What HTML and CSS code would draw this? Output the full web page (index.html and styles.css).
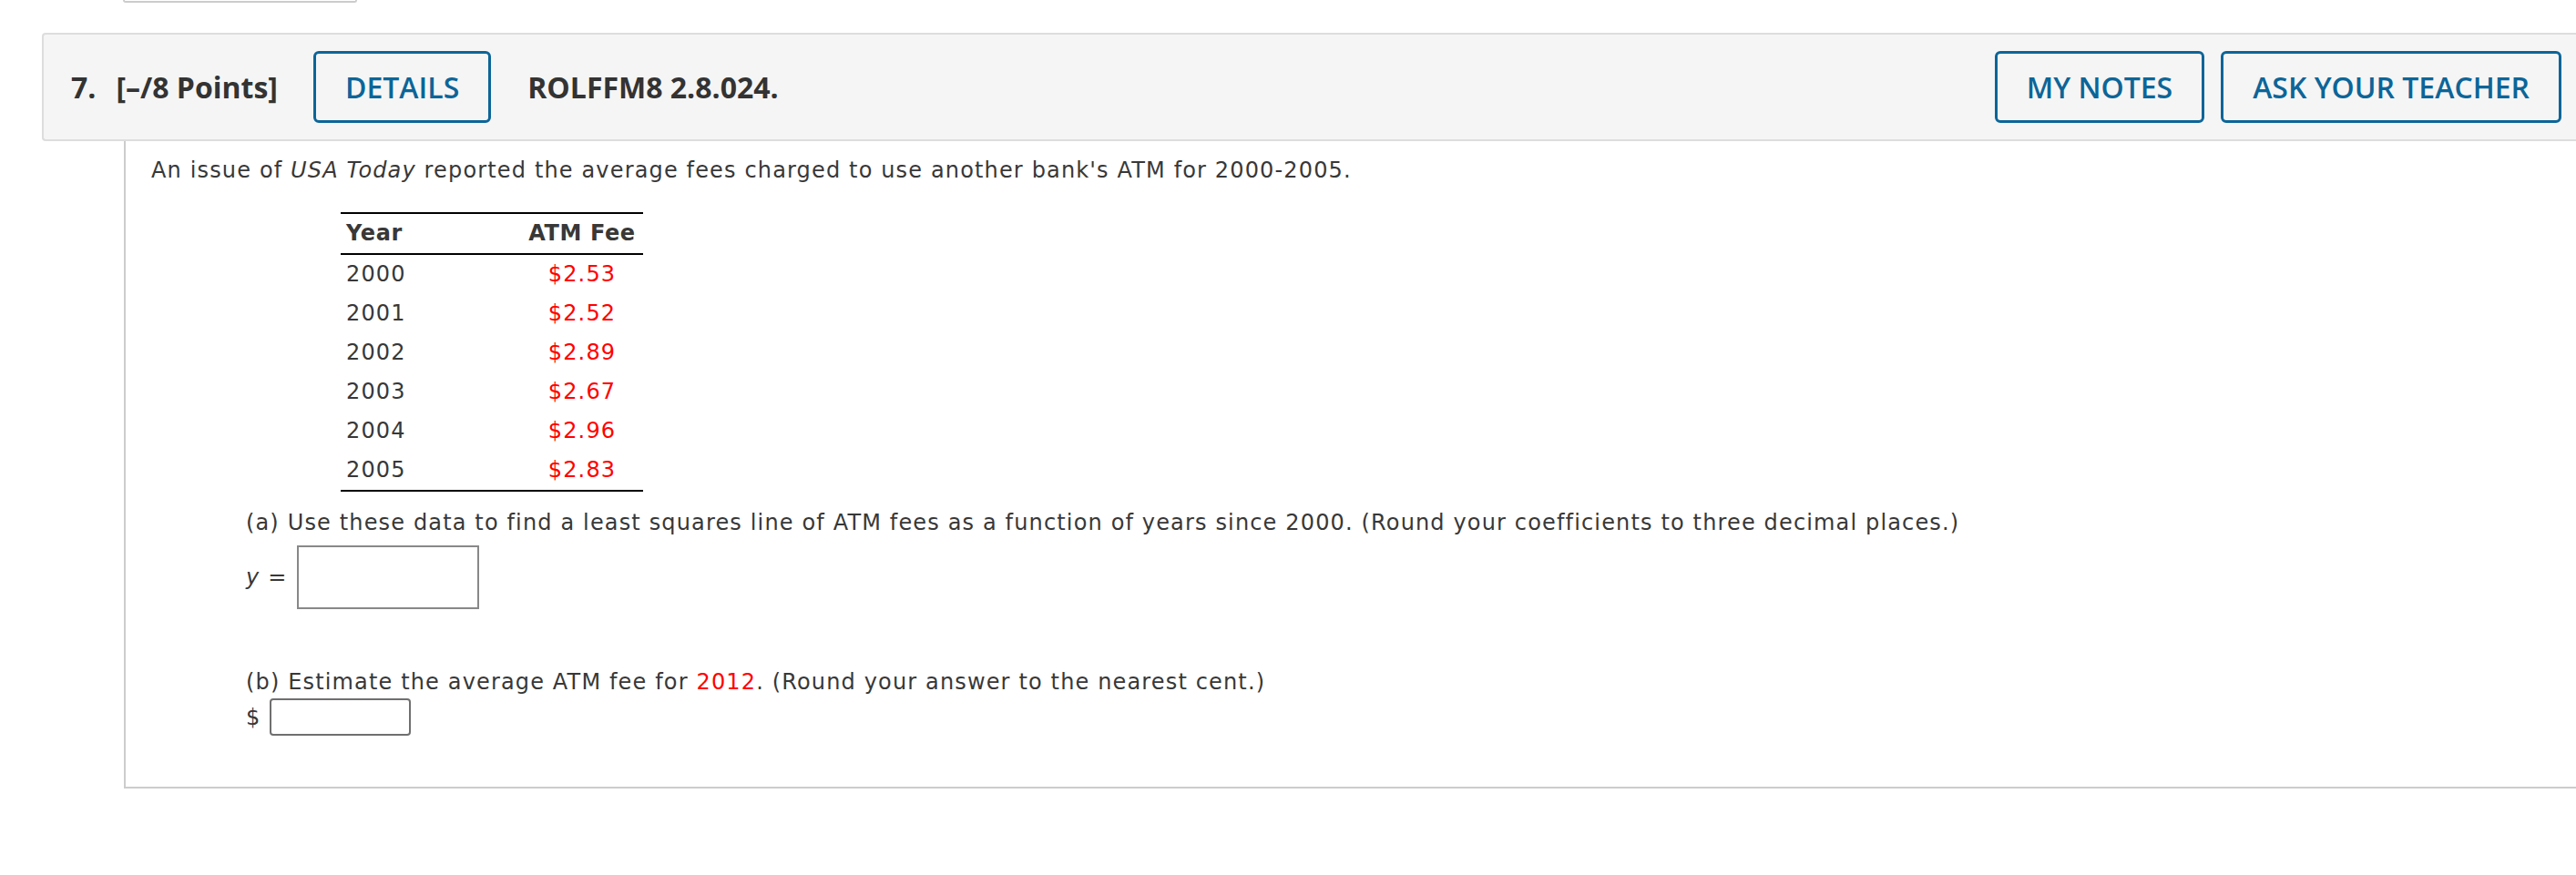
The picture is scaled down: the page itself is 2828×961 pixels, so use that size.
FILE: index.html
```html
<!DOCTYPE html>
<html>
<head>
<meta charset="utf-8">
<link rel="stylesheet" href="styles.css">
</head>
<body>
<div class="prev-tab"></div>
<div class="qhead">
  <span class="qnum">7.</span>
  <span class="qpts">[–/8 Points]</span>
  <button class="btn btn-details">DETAILS</button>
  <span class="qid">ROLFFM8 2.8.024.</span>
  <span class="spacer"></span>
  <button class="btn">MY NOTES</button>
  <button class="btn btn-ask">ASK YOUR TEACHER</button>
</div>
<div class="qbody">
  <p class="intro">An issue of <em>USA Today</em> reported the average fees charged to use another bank's ATM for 2000-2005.</p>
  <table class="data">
    <thead>
      <tr><th class="c-year">Year</th><th class="c-fee">ATM Fee</th></tr>
    </thead>
    <tbody>
      <tr><td class="c-year">2000</td><td class="c-fee red">$2.53</td></tr>
      <tr><td class="c-year">2001</td><td class="c-fee red">$2.52</td></tr>
      <tr><td class="c-year">2002</td><td class="c-fee red">$2.89</td></tr>
      <tr><td class="c-year">2003</td><td class="c-fee red">$2.67</td></tr>
      <tr><td class="c-year">2004</td><td class="c-fee red">$2.96</td></tr>
      <tr><td class="c-year">2005</td><td class="c-fee red">$2.83</td></tr>
    </tbody>
  </table>
  <p class="part-a">(a) Use these data to find a least squares line of ATM fees as a function of years since 2000. (Round your coefficients to three decimal places.)</p>
  <div class="answer-a"><span class="lbl"><i>y</i> = </span><span class="box-a"></span></div>
  <p class="part-b">(b) Estimate the average ATM fee for <span class="red">2012</span>. (Round your answer to the nearest cent.)</p>
  <div class="answer-b"><span class="lbl">$ </span><span class="box-b"></span></div>
</div>
</body>
</html>
```
FILE: styles.css
```css
html, body {
  margin: 0;
  padding: 0;
  background: #ffffff;
}
body {
  font-family: "DejaVu Sans", Verdana, sans-serif;
  font-size: 24px;
  line-height: 28px;
  letter-spacing: 1.15px;
  color: #383838;
}
.prev-tab {
  margin-left: 135px;
  width: 253px;
  height: 1px;
  border: 2px solid #cccccc;
  border-top: none;
  border-radius: 0 0 6px 6px;
}
.qhead {
  margin-top: 33px;
  margin-left: 46px;
  height: 115px;
  background: #f5f5f5;
  border: 2px solid #dddddd;
  border-right: none;
  border-radius: 4px 0 0 4px;
  display: flex;
  align-items: center;
  padding: 0 16px 0 30px;
  font-family: "Open Sans", sans-serif;
  font-size: 32px;
  font-weight: 700;
  letter-spacing: 0;
  color: #333333;
}
.qnum {
  margin-right: 22px;
}
.qpts {
  margin-right: 39px;
}
.qid {
  margin-left: 40px;
}
.spacer {
  flex: 1;
}
.btn {
  box-sizing: border-box;
  height: 79px;
  padding: 0 32px;
  border: 3px solid #0c6598;
  border-radius: 6px;
  background: transparent;
  color: #0c6598;
  font-family: "Open Sans", sans-serif;
  font-size: 32px;
  font-weight: 600;
  line-height: 1;
}
.btn-ask {
  margin-left: 18px;
}
.qbody {
  margin-left: 136px;
  border-left: 2px solid #cccccc;
  border-bottom: 2px solid #cccccc;
  padding: 18px 0 56px 28px;
}
.intro {
  margin: 0;
}
.data {
  margin: 32px 0 0 208px;
  border-collapse: collapse;
  border-top: 2px solid #000000;
  border-bottom: 2px solid #000000;
  width: 332px;
}
.data thead tr {
  border-bottom: 2px solid #000000;
}
.data th, .data td {
  height: 43px;
  line-height: 43px;
  padding: 0;
  font-weight: normal;
}
.data th {
  font-weight: bold;
  letter-spacing: 0.6px;
}
.c-year {
  text-align: left;
  padding-left: 6px !important;
}
.c-fee {
  text-align: center;
  padding-right: 6px !important;
  width: 122px;
}
.red {
  color: #ff0000;
}
.part-a {
  margin: 20px 0 0 104px;
}
.answer-a {
  margin: 11px 0 0 104px;
  display: flex;
  align-items: center;
}
.lbl {
  white-space: pre;
}
.box-a {
  display: block;
  box-sizing: border-box;
  width: 200px;
  height: 70px;
  margin-left: 2px;
  border: 2px solid #888888;
  background: #ffffff;
}
.part-b {
  margin: 66px 0 0 104px;
}
.answer-b {
  margin: 4px 0 0 104px;
  display: flex;
  align-items: center;
}
.box-b {
  display: block;
  box-sizing: border-box;
  width: 155px;
  height: 41px;
  margin-left: 1px;
  border: 2px solid #6f6f6f;
  border-radius: 4px;
  background: #ffffff;
}
```
